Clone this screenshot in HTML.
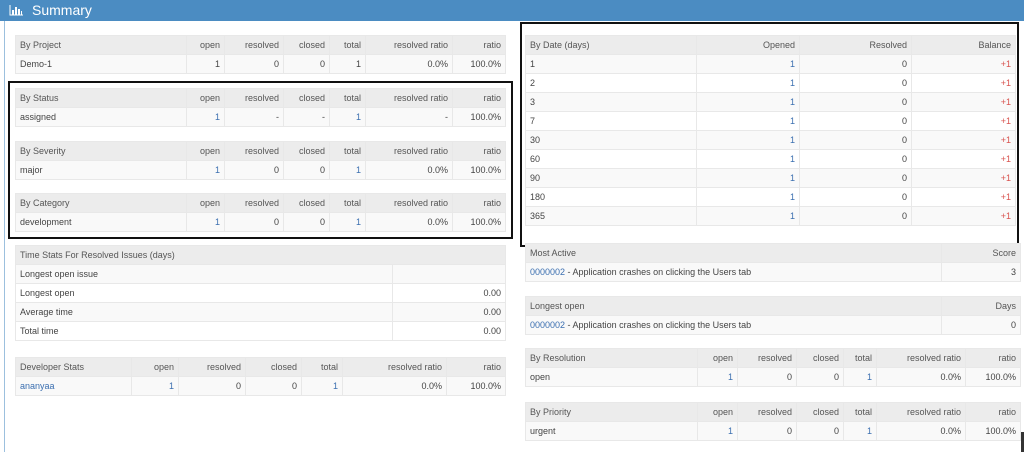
<!DOCTYPE html><html><head><style>
*{margin:0;padding:0;box-sizing:border-box}
body{width:1024px;height:452px;background:#fff;position:relative;overflow:hidden;font-family:"Liberation Sans",sans-serif;font-size:9px;color:#444}
.hd{position:absolute;left:0;top:0;width:1024px;height:21px;background:#4b8cc2;color:#fff;font-size:14px;line-height:21px;padding-left:32px}
.lb{position:absolute;left:4px;top:21px;width:1px;height:431px;background:#9cc0de}
table{position:absolute;border-collapse:collapse;table-layout:fixed}
td{height:19px;padding:0 4px;border:1px solid #e8e8e8;white-space:nowrap;overflow:hidden;text-align:right}
td:first-child{text-align:left}
tr.h td{background:#ececec;color:#555}
tr.d td{background:#f9f9f9}
tr.w td{background:#fff}
.b{color:#3b6fb0}.r{color:#d9534f}
.box{position:absolute;border:2.5px solid #111}
</style></head><body>
<div class="hd"><svg style="position:absolute;left:9px;top:5px" width="14" height="11"><path d="M1 0v10h13" stroke="#fff" fill="none"/><rect x="3" y="5" width="2" height="5" fill="#fff"/><rect x="6" y="2" width="2" height="8" fill="#fff"/><rect x="9" y="4" width="2" height="6" fill="#fff"/><rect x="12" y="6" width="1" height="4" fill="#fff"/></svg>Summary</div>
<div class="lb"></div>

<table style="left:15px;top:35px;width:490px"><colgroup><col style="width:171px"><col style="width:38px"><col style="width:59px"><col style="width:46px"><col style="width:36px"><col style="width:87px"><col style="width:53px"></colgroup>
<tr class="h"><td>By Project</td><td>open</td><td>resolved</td><td>closed</td><td>total</td><td>resolved ratio</td><td>ratio</td></tr>
<tr class="d"><td>Demo-1</td><td>1</td><td>0</td><td>0</td><td>1</td><td>0.0%</td><td>100.0%</td></tr></table>

<table style="left:15px;top:88px;width:490px"><colgroup><col style="width:171px"><col style="width:38px"><col style="width:59px"><col style="width:46px"><col style="width:36px"><col style="width:87px"><col style="width:53px"></colgroup>
<tr class="h"><td>By Status</td><td>open</td><td>resolved</td><td>closed</td><td>total</td><td>resolved ratio</td><td>ratio</td></tr>
<tr class="d"><td>assigned</td><td class="b">1</td><td>-</td><td>-</td><td class="b">1</td><td>-</td><td>100.0%</td></tr></table>

<table style="left:15px;top:141px;width:490px"><colgroup><col style="width:171px"><col style="width:38px"><col style="width:59px"><col style="width:46px"><col style="width:36px"><col style="width:87px"><col style="width:53px"></colgroup>
<tr class="h"><td>By Severity</td><td>open</td><td>resolved</td><td>closed</td><td>total</td><td>resolved ratio</td><td>ratio</td></tr>
<tr class="d"><td>major</td><td class="b">1</td><td>0</td><td>0</td><td class="b">1</td><td>0.0%</td><td>100.0%</td></tr></table>

<table style="left:15px;top:193px;width:490px"><colgroup><col style="width:171px"><col style="width:38px"><col style="width:59px"><col style="width:46px"><col style="width:36px"><col style="width:87px"><col style="width:53px"></colgroup>
<tr class="h"><td>By Category</td><td>open</td><td>resolved</td><td>closed</td><td>total</td><td>resolved ratio</td><td>ratio</td></tr>
<tr class="d"><td>development</td><td class="b">1</td><td>0</td><td>0</td><td class="b">1</td><td>0.0%</td><td>100.0%</td></tr></table>
<div class="box" style="left:8px;top:81px;width:505px;height:158px"></div>

<table style="left:525px;top:35px;width:490px"><colgroup><col style="width:171px"><col style="width:103px"><col style="width:112px"><col style="width:104px"></colgroup>
<tr class="h"><td>By Date (days)</td><td>Opened</td><td>Resolved</td><td>Balance</td></tr>
<tr class="d"><td>1</td><td class="b">1</td><td>0</td><td class="r">+1</td></tr>
<tr class="w"><td>2</td><td class="b">1</td><td>0</td><td class="r">+1</td></tr>
<tr class="d"><td>3</td><td class="b">1</td><td>0</td><td class="r">+1</td></tr>
<tr class="w"><td>7</td><td class="b">1</td><td>0</td><td class="r">+1</td></tr>
<tr class="d"><td>30</td><td class="b">1</td><td>0</td><td class="r">+1</td></tr>
<tr class="w"><td>60</td><td class="b">1</td><td>0</td><td class="r">+1</td></tr>
<tr class="d"><td>90</td><td class="b">1</td><td>0</td><td class="r">+1</td></tr>
<tr class="w"><td>180</td><td class="b">1</td><td>0</td><td class="r">+1</td></tr>
<tr class="d"><td>365</td><td class="b">1</td><td>0</td><td class="r">+1</td></tr></table>
<div class="box" style="left:520px;top:22px;width:499px;height:225px"></div>

<table style="left:15px;top:245px;width:490px"><colgroup><col style="width:377px"><col style="width:113px"></colgroup>
<tr class="h"><td colspan="2">Time Stats For Resolved Issues (days)</td></tr>
<tr class="d"><td>Longest open issue</td><td></td></tr>
<tr class="w"><td>Longest open</td><td>0.00</td></tr>
<tr class="d"><td>Average time</td><td>0.00</td></tr>
<tr class="w"><td>Total time</td><td>0.00</td></tr></table>

<table style="left:15px;top:357px;width:490px"><colgroup><col style="width:116px"><col style="width:47px"><col style="width:67px"><col style="width:56px"><col style="width:41px"><col style="width:104px"><col style="width:59px"></colgroup>
<tr class="h"><td>Developer Stats</td><td>open</td><td>resolved</td><td>closed</td><td>total</td><td>resolved ratio</td><td>ratio</td></tr>
<tr class="d"><td class="b">ananyaa</td><td class="b">1</td><td>0</td><td>0</td><td class="b">1</td><td>0.0%</td><td>100.0%</td></tr></table>

<table style="left:525px;top:243px;width:495px"><colgroup><col style="width:416px"><col style="width:79px"></colgroup>
<tr class="h"><td>Most Active</td><td>Score</td></tr>
<tr class="d"><td><span class="b">0000002</span> - Application crashes on clicking the Users tab</td><td>3</td></tr></table>

<table style="left:525px;top:296px;width:495px"><colgroup><col style="width:416px"><col style="width:79px"></colgroup>
<tr class="h"><td>Longest open</td><td>Days</td></tr>
<tr class="d"><td><span class="b">0000002</span> - Application crashes on clicking the Users tab</td><td>0</td></tr></table>

<table style="left:525px;top:348px;width:495px"><colgroup><col style="width:172px"><col style="width:40px"><col style="width:59px"><col style="width:47px"><col style="width:33px"><col style="width:89px"><col style="width:55px"></colgroup>
<tr class="h"><td>By Resolution</td><td>open</td><td>resolved</td><td>closed</td><td>total</td><td>resolved ratio</td><td>ratio</td></tr>
<tr class="d"><td>open</td><td class="b">1</td><td>0</td><td>0</td><td class="b">1</td><td>0.0%</td><td>100.0%</td></tr></table>

<table style="left:525px;top:402px;width:495px"><colgroup><col style="width:172px"><col style="width:40px"><col style="width:59px"><col style="width:47px"><col style="width:33px"><col style="width:89px"><col style="width:55px"></colgroup>
<tr class="h"><td>By Priority</td><td>open</td><td>resolved</td><td>closed</td><td>total</td><td>resolved ratio</td><td>ratio</td></tr>
<tr class="d"><td>urgent</td><td class="b">1</td><td>0</td><td>0</td><td class="b">1</td><td>0.0%</td><td>100.0%</td></tr></table>
<div style="position:absolute;left:1021px;top:432px;width:3px;height:20px;background:#333"></div>
</body></html>
